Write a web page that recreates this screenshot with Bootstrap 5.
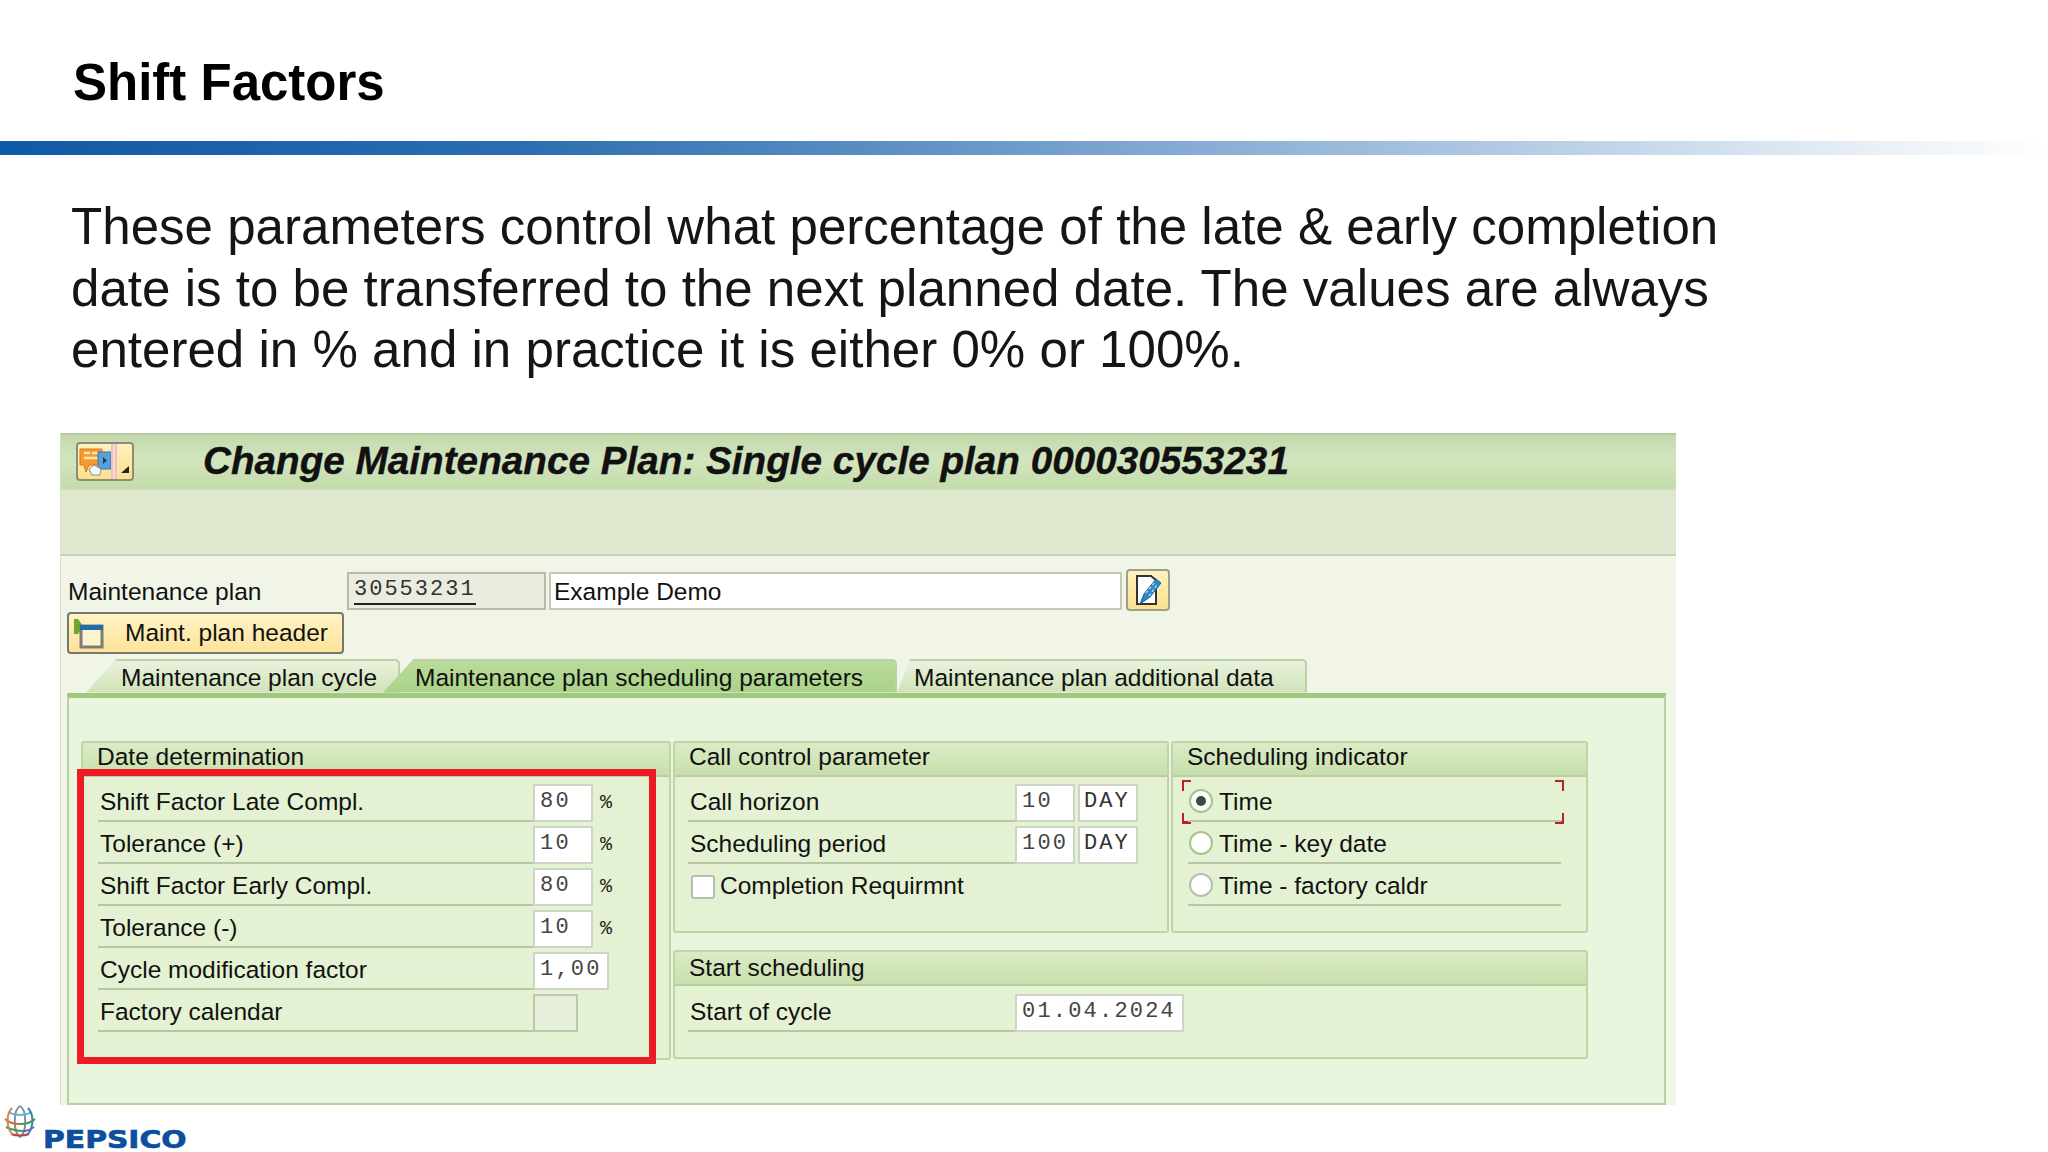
<!DOCTYPE html>
<html lang="en">
<head>
    <meta charset="UTF-8">
    <meta name="viewport" content="width=device-width, initial-scale=1.0">
    <title>Shift Factors</title>
    <link href="https://cdn.jsdelivr.net/npm/bootstrap@5.3.2/dist/css/bootstrap.min.css" rel="stylesheet">
    <style>
        html, body { width: 2048px; height: 1152px; overflow: hidden; background: #fff; }
        body { font-family: "Liberation Sans", Arial, sans-serif; color: #111; }
        .slide-head { height: 141px; padding: 0 0 20px 73px; font-size: 51px; font-weight: 700; color: #000; }
        .slide-bar { height: 14px; background: linear-gradient(90deg, #0f5aa6 0%, #2a6db0 25%, #6f9ccb 50%, #adc7e2 72%, #e4edf5 90%, #fff 100%); }
        .slide-text { margin: 41px 0 52px 71px; font-size: 51.1px; line-height: 61.5px; color: #151515; white-space: nowrap; }

        .sap-frame { width: 1616px; height: 672px; margin-left: 60px; background: #f0f5e8; border-left: 1px solid #d5e0c6; }
        .sap-title { height: 58px; padding-left: 15px; background: linear-gradient(180deg, #c2d9aa 0%, #d3e5bf 45%, #c3dcaa 100%); border-top: 2px solid #b6c9a3; border-bottom: 2px solid #d7e4c8; }
        .sap-title h1 { margin: 0 0 0 69px; font-size: 38.7px; font-weight: 700; font-style: italic; color: #111; white-space: nowrap; -webkit-text-stroke: 0.4px #111; }
        .sap-toolbar { height: 65px; background: #dfe9d0; border-bottom: 2px solid #c5d3b5; }
        .menu-btn { width: 58px; height: 39px; padding-left: 1px; background: linear-gradient(180deg, #fff2c0, #fbe08e); border: 2px solid #8c8f78; border-radius: 4px; }
        .menu-sep { width: 6px; height: 100%; border-left: 2px solid #eebbd6; border-right: 2px solid #eebbd6; background: #f6e3b8; }
        .menu-arrow { margin: 0 0 6px 4px; }

        .head-row { margin: 16px 0 0 0; height: 38px; padding-left: 7px; font-size: 24.5px; }
        .head-label { width: 279px; padding-top: 4px; }
        .head-key { width: 199px; height: 38px; background: #e8eddf; border: 2px solid #b5bcaa; padding: 2px 0 0 5px; font: 22px "Liberation Mono", monospace; letter-spacing: 2px; color: #333; }
        .head-key span { border-bottom: 2px solid #222; line-height: 27px; display: inline-block; }
        .head-name { width: 573px; height: 38px; margin-left: 3px; background: #fff; border: 2px solid #c3cbb8; padding: 3px 0 0 3px; }
        .edit-btn { width: 44px; height: 42px; margin: -2px 0 0 4px; padding: 0; background: linear-gradient(180deg, #fff2c0, #fbe08e); border: 2px solid #a0a08a; border-radius: 4px; }

        .hdr-btn { width: 277px; height: 42px; margin: 2px 0 0 6px; padding: 2px 0 0 5px; font-size: 24.5px; color: #111; background: linear-gradient(180deg, #fff3c6, #fde39b); border: 2px solid #77786a; border-radius: 4px; }
        .hdr-btn svg { margin-right: 21px; }

        .tab-strip { margin: 5px 0 0 25px; height: 34px; font-size: 24.5px; }
        .sap-tab { height: 34px; padding-top: 1px; line-height: 31px; white-space: nowrap; clip-path: polygon(31px 0, 100% 0, 100% 100%, 0 100%); background: linear-gradient(180deg, #e9f2dc, #cfe2b8); border-top: 2px solid #bed0aa; border-right: 2px solid #bed0aa; border-top-right-radius: 5px; }
        .tab-one { width: 314px; padding-left: 35px; }
        .tab-two { width: 514px; margin-left: -17px; padding-left: 32px; background: linear-gradient(180deg, #b9dc9a, #a9d288); position: relative; }
        .tab-three { width: 410px; margin-left: 0; padding-left: 17px; clip-path: polygon(13px 0, 100% 0, 100% 100%, 0 100%); }
        .tab-body { width: 1599px; height: 412px; margin-left: 6px; padding: 43px 0 0 12px; background: #eaf5de; border: 2px solid #b8d1a0; border-top: 5px solid #9ec97f; }

        .grp-wrap { position: relative; }
        .red-box { position: absolute; left: -4px; top: 28px; width: 579px; height: 295px; border: 7px solid #ed1c24; pointer-events: none; }
        .grp.card { border: 2px solid #bfd4a9; border-radius: 3px; background: #e4f2d3; color: #111; font-size: 24.5px; }
        .grp .card-header { height: 34px; padding: 0 0 0 14px; line-height: 28px; background: linear-gradient(180deg, #dcebc7, #c8dfac); border-bottom: 2px solid #b8cfa0; border-radius: 0; white-space: nowrap; }
        .grp .card-body { padding: 7px 0 0 15px; }
        .grp-date { width: 590px; height: 319px; }
        .right-col { margin-left: 2px; }
        .grp-call { width: 496px; height: 192px; }
        .grp.grp-call .card-body { padding-left: 13px; }
        .grp-sched { width: 417px; height: 192px; margin-left: 2px; }
        .grp-start { width: 915px; height: 109px; margin-top: 17px; }
        .grp.grp-start .card-header { line-height: 31px; }
        .grp.grp-start .card-body { padding: 8px 0 0 13px; }

        .fld-row { height: 38px; margin-bottom: 4px; }
        .fld-label { height: 38px; padding-left: 2px; line-height: 36px; border-bottom: 2px solid #b7c7a5; white-space: nowrap; }
        .w-date { width: 435px; }
        .w-call { width: 327px; }
        .w-sched { width: 373px; padding-left: 31px; }
        .fld { width: 60px; height: 38px; padding-left: 5px; background: #fff; border: 2px solid #cdd5c4; font: 22px/32px "Liberation Mono", monospace; letter-spacing: 2.2px; color: #444; }
        .fld-wide { width: 76px; }
        .fld-empty { width: 45px; background: #e6efd9; border-color: #bcc8af; }
        .fld-unit { width: 60px; margin-left: 3px; padding-left: 4px; letter-spacing: 2px; color: #333; }
        .fld-long { width: 169px; }
        .pct { margin-left: 7px; font: 20px "Liberation Mono", monospace; color: #222; }
        .chk-box { width: 24px; height: 24px; margin: 0 5px 0 3px; background: #fff; border: 2px solid #b7bfae; border-radius: 3px; }
        .radio-dot { position: relative; }
        .radio-dot::before { content: ""; position: absolute; left: 1px; top: 50%; width: 24px; height: 24px; margin-top: -13px; background: #fff; border: 2px solid #a5c58b; border-radius: 50%; }
        .radio-on::after { content: ""; position: absolute; left: 8px; top: 50%; width: 10px; height: 10px; margin-top: -6px; background: #444; border-radius: 50%; }
        .radio-off-grey::before { border-color: #b9bdb4; }
        .focus-mark { position: absolute; width: 9px; height: 11px; border: 0 solid #b5222a; }
        .fm-tl { left: 9px; top: 3px; border-width: 2px 0 0 2px; }
        .fm-tr { left: 382px; top: 3px; border-width: 2px 2px 0 0; }
        .fm-bl { left: 9px; top: 36px; border-width: 0 0 3px 2px; }
        .fm-br { left: 382px; top: 36px; border-width: 0 2px 3px 0; }
        .sched-body { position: relative; }

        .logo-row { margin-left: 4px; height: 47px; }
        .logo-word { margin: 22px 0 0 7px; font: 700 25px/1 "DejaVu Sans", sans-serif; color: #0c4f9c; -webkit-text-stroke: 0.7px #0c4f9c; transform: scaleX(1.19); transform-origin: left center; }
    </style>
</head>
<body>
    <div class="slide-head d-flex align-items-end">Shift Factors</div>
    <div class="slide-bar"></div>
    <div class="slide-text">These parameters control what percentage of the late &amp; early completion<br>date is to be transferred to the next planned date. The values are always<br>entered in % and in practice it is either 0% or 100%.</div>

    <div class="sap-frame">
        <div class="sap-title d-flex align-items-center">
            <div class="menu-btn d-flex align-items-center">
                <svg width="32" height="28" viewBox="0 0 32 28">
                    <path d="M1 1h22v16H10l-3 7-2-7H1z" fill="#f59a30" stroke="#e07a18"/>
                    <path d="M5 5h6M13 5h6M5 10h14" stroke="#ffe9a8" stroke-width="2.5"/>
                    <rect x="19" y="4" width="13" height="17" fill="#5aa0d6" stroke="#2f78b2"/>
                    <path d="M24 9l4 3.5-4 3.5z" fill="#123f70"/>
                    <path d="M10 21l5-4 7 4-1 6h-8z" fill="#f7f7f7" stroke="#8d8d8d"/>
                </svg>
                <div class="menu-sep"></div>
                <svg class="menu-arrow align-self-end" width="8" height="7" viewBox="0 0 8 7"><path d="M8 0v7H0z" fill="#222"/></svg>
            </div>
            <h1>Change Maintenance Plan: Single cycle plan 000030553231</h1>
        </div>
        <div class="sap-toolbar"></div>

        <div class="head-row d-flex align-items-center">
            <div class="head-label">Maintenance plan</div>
            <div class="head-key"><span>30553231</span></div>
            <div class="head-name d-flex align-items-center">Example Demo</div>
            <button class="btn edit-btn d-flex align-items-center justify-content-center" type="button">
                <svg width="30" height="32" viewBox="0 0 30 32">
                    <path d="M4 2h14l5 4v24H4z" fill="#fff" stroke="#333" stroke-width="2"/>
                    <path d="M7 30l4-10 12-15 5 4-11 14z" fill="#2f86c8" stroke="#1c5f99"/>
                    <path d="M13 19l9-11M16 22l8-11" stroke="#9fd0ef" stroke-width="1.5" stroke-dasharray="3 2"/>
                </svg>
            </button>
        </div>

        <button class="btn hdr-btn d-flex align-items-center" type="button">
            <svg width="30" height="30" viewBox="0 0 30 30">
                <path d="M0 0h4l5 7-5 8H0z" fill="#6aa92d"/>
                <rect x="7" y="7" width="21" height="21" fill="#fdf3cf" stroke="#7d7d78" stroke-width="3"/>
                <rect x="6" y="6" width="23" height="5" fill="#1b6fa6"/>
            </svg>
            Maint. plan header
        </button>

        <div class="tab-strip d-flex">
            <div class="sap-tab tab-one">Maintenance plan cycle</div>
            <div class="sap-tab tab-two">Maintenance plan scheduling parameters</div>
            <div class="sap-tab tab-three">Maintenance plan additional data</div>
        </div>

        <div class="tab-body">
            <div class="grp-wrap d-flex">
                <div class="card grp grp-date">
                    <div class="card-header">Date determination</div>
                    <div class="card-body">
                        <div class="fld-row d-flex align-items-center"><div class="fld-label w-date">Shift Factor Late Compl.</div><div class="fld">80</div><div class="pct">%</div></div>
                        <div class="fld-row d-flex align-items-center"><div class="fld-label w-date">Tolerance (+)</div><div class="fld">10</div><div class="pct">%</div></div>
                        <div class="fld-row d-flex align-items-center"><div class="fld-label w-date">Shift Factor Early Compl.</div><div class="fld">80</div><div class="pct">%</div></div>
                        <div class="fld-row d-flex align-items-center"><div class="fld-label w-date">Tolerance (-)</div><div class="fld">10</div><div class="pct">%</div></div>
                        <div class="fld-row d-flex align-items-center"><div class="fld-label w-date">Cycle modification factor</div><div class="fld fld-wide">1,00</div></div>
                        <div class="fld-row d-flex align-items-center"><div class="fld-label w-date">Factory calendar</div><div class="fld fld-empty"></div></div>
                    </div>
                </div>
                <div class="right-col d-flex flex-column">
                    <div class="d-flex">
                        <div class="card grp grp-call">
                            <div class="card-header">Call control parameter</div>
                            <div class="card-body">
                                <div class="fld-row d-flex align-items-center"><div class="fld-label w-call">Call horizon</div><div class="fld">10</div><div class="fld fld-unit">DAY</div></div>
                                <div class="fld-row d-flex align-items-center"><div class="fld-label w-call">Scheduling period</div><div class="fld">100</div><div class="fld fld-unit">DAY</div></div>
                                <div class="fld-row d-flex align-items-center"><div class="chk-box"></div>Completion Requirmnt</div>
                            </div>
                        </div>
                        <div class="card grp grp-sched">
                            <div class="card-header">Scheduling indicator</div>
                            <div class="card-body sched-body">
                                <div class="focus-mark fm-tl"></div><div class="focus-mark fm-tr"></div>
                                <div class="focus-mark fm-bl"></div><div class="focus-mark fm-br"></div>
                                <div class="fld-row d-flex align-items-center"><div class="fld-label w-sched radio-dot radio-on">Time</div></div>
                                <div class="fld-row d-flex align-items-center"><div class="fld-label w-sched radio-dot">Time - key date</div></div>
                                <div class="fld-row d-flex align-items-center"><div class="fld-label w-sched radio-dot radio-off-grey">Time - factory caldr</div></div>
                            </div>
                        </div>
                    </div>
                    <div class="card grp grp-start">
                        <div class="card-header">Start scheduling</div>
                        <div class="card-body">
                            <div class="fld-row d-flex align-items-center"><div class="fld-label w-call">Start of cycle</div><div class="fld fld-long">01.04.2024</div></div>
                        </div>
                    </div>
                </div>
                <div class="red-box"></div>
            </div>
        </div>
    </div>

    <div class="logo-row d-flex">
        <svg width="32" height="33" viewBox="0 0 32 33" fill="none" stroke-width="2">
            <path d="M16 1C9 5 9 27 16 32C23 27 23 5 16 1" stroke="#7a8d9a"/>
            <path d="M4 7C11 11 21 11 28 7" stroke="#6ab0d8"/>
            <path d="M1 14C6 19 12 19 16 19" stroke="#d9633c"/>
            <path d="M16 19C22 19 27 18 31 14" stroke="#3f9a52"/>
            <path d="M2 22C10 26 16 26 20 26" stroke="#3f9a52"/>
            <path d="M20 26C24 26 27 24 30 22" stroke="#7b5aa8"/>
            <path d="M7 29C12 31 20 31 25 29" stroke="#c4403c"/>
            <path d="M8 3C1 11 3 24 9 30" stroke="#d08a5a"/>
            <path d="M24 3C31 11 29 24 23 30" stroke="#3f7fb0"/>
        </svg>
        <div class="logo-word">PEPSICO</div>
    </div>

    <script src="https://cdn.jsdelivr.net/npm/bootstrap@5.3.2/dist/js/bootstrap.bundle.min.js"></script>
</body>
</html>
